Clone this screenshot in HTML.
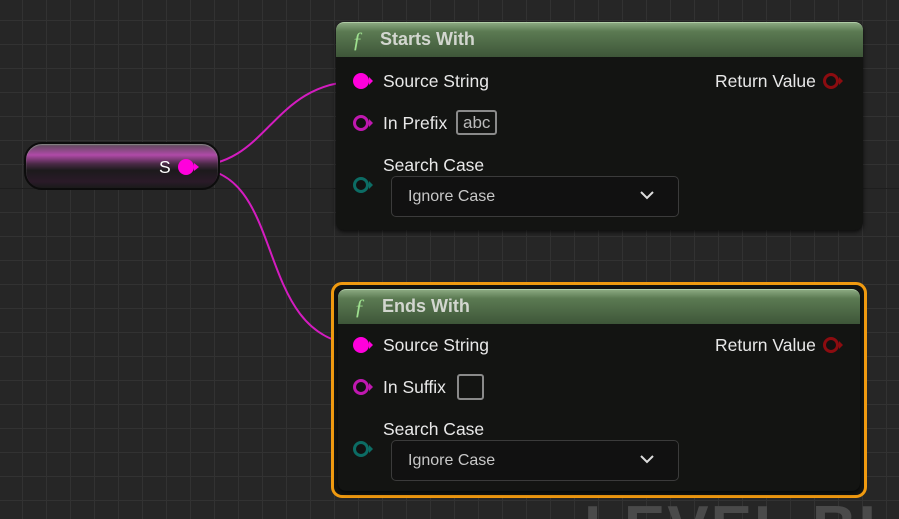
<!DOCTYPE html>
<html style="overflow:hidden;width:899px;height:519px"><head><meta charset="utf-8"><style>
*{margin:0;padding:0;box-sizing:border-box}
body{width:899px;height:519px;overflow:hidden;position:relative;font-family:"Liberation Sans",sans-serif;
background-color:#262626;
background-image:linear-gradient(#323232 1px,transparent 1px),linear-gradient(90deg,#323232 1px,transparent 1px);
background-size:24px 24px;background-position:0 20px,22px 0;}
.major{position:absolute;left:0;width:899px;height:1px;background:#1e1e1e;top:188px}
.node{position:absolute;background:#131412;border-radius:8px;box-shadow:0 2px 4px rgba(0,0,0,.7)}
.hdr{position:absolute;left:0;top:0;right:0;height:35px;border-radius:8px 8px 0 0;
background:linear-gradient(180deg,#8aa880 0%,#5b7a52 25%,#3e5639 100%);border-top:1px solid #b0cca6}
.hdr .f{position:absolute;left:16px;top:4px;color:#9ee08f;font-family:"Liberation Serif",serif;font-style:italic;font-size:22px}
.hdr .t{position:absolute;left:44px;top:6px;color:#d2d6cf;font-weight:bold;font-size:18px}
.lbl{position:absolute;color:#e8e8e8;font-size:17.5px}
.pin{position:absolute;width:16px;height:16px;border-radius:50%}
.arr{position:absolute;width:0;height:0;border-top:4px solid transparent;border-bottom:4px solid transparent}
.box{position:absolute;border:2px solid #8a8a8a;border-radius:3px;color:#bbb;font-size:17px;padding:0 5px;height:25px;line-height:21px}
.dd{position:absolute;width:288px;height:41px;border:1px solid #3b3b3b;border-radius:5px;background:#111;color:#c8c8c8;font-size:16px;padding:11px 0 0 16px}
.dd svg{position:absolute;right:24px;top:14px}
</style></head><body>
<div class="major"></div>
<div style="position:absolute;left:584px;top:498px;width:315px;height:21px;overflow:hidden">
<div style="position:absolute;left:0;top:0;color:#4a4a4a;font-weight:bold;font-size:62px;white-space:nowrap;letter-spacing:2px;line-height:62px">LEVEL BLUEPRINT</div></div>
<svg width="899" height="519" style="position:absolute;left:0;top:0">
<path d="M192 166 C 270 166, 270 82, 360 81" stroke="#d41cc0" stroke-width="2" fill="none"/>
<path d="M192 168 C 290 168, 250 340, 360 345" stroke="#d41cc0" stroke-width="2" fill="none"/>
</svg>
<div style="position:absolute;left:24px;top:142px;width:196px;height:48px;border-radius:18px;background:linear-gradient(180deg,#5a4a58 0%,#b04aa8 25%,#4a2a46 45%,#1c1a1c 60%,#2a1a28 85%,#1a1a1a 100%);border:2px solid #0c0c0c;box-shadow:inset 0 1px 1px #888"></div>
<div class="lbl" style="left:159px;top:157px;color:#fff">S</div>
<div class="pin" style="left:178px;top:159px;background:#ff00dc"></div>
<div class="arr" style="left:194px;top:163px;border-left:5px solid #ff00dc"></div>

<div class="node" style="left:336px;top:22px;width:527px;height:208px">
<div class="hdr"><span class="f">ƒ</span><span class="t">Starts With</span></div>
</div>
<div style="position:absolute;left:331px;top:282px;width:536px;height:216px;border:3px solid #f09a10;border-radius:11px;background:#131412"></div>
<div class="node" style="left:338px;top:289px;width:522px;height:202px">
<div class="hdr"><span class="f">ƒ</span><span class="t">Ends With</span></div>
</div>

<div class="pin" style="left:353px;top:73px;background:#ff00dc"></div><div class="arr" style="left:369px;top:77px;border-left:4px solid #ff00dc"></div>
<div class="lbl" style="left:383px;top:71px">Source String</div>
<div class="lbl" style="left:715px;top:71px">Return Value</div>
<div class="pin" style="left:823px;top:73px;border:3px solid #8c0c10;background:#111"></div><div class="arr" style="left:839px;top:77px;border-left:4px solid #8c0c10"></div>
<div class="pin" style="left:353px;top:115px;border:3px solid #c018b0;background:#111"></div><div class="arr" style="left:369px;top:119px;border-left:4px solid #c018b0"></div>
<div class="lbl" style="left:383px;top:113px">In Prefix</div>
<div class="box" style="left:456px;top:110px">abc</div>
<div class="lbl" style="left:383px;top:155px">Search Case</div>
<div class="pin" style="left:353px;top:177px;border:3px solid #0c6c64;background:#111"></div><div class="arr" style="left:369px;top:181px;border-left:4px solid #0c6c64"></div>
<div class="dd" style="left:391px;top:176px">Ignore Case<svg width="14" height="9"><path d="M1 1 L7 7 L13 1" stroke="#ddd" stroke-width="2" fill="none"/></svg></div>

<div class="pin" style="left:353px;top:337px;background:#ff00dc"></div><div class="arr" style="left:369px;top:341px;border-left:4px solid #ff00dc"></div>
<div class="lbl" style="left:383px;top:335px">Source String</div>
<div class="lbl" style="left:715px;top:335px">Return Value</div>
<div class="pin" style="left:823px;top:337px;border:3px solid #8c0c10;background:#111"></div><div class="arr" style="left:839px;top:341px;border-left:4px solid #8c0c10"></div>
<div class="pin" style="left:353px;top:379px;border:3px solid #c018b0;background:#111"></div><div class="arr" style="left:369px;top:383px;border-left:4px solid #c018b0"></div>
<div class="lbl" style="left:383px;top:377px">In Suffix</div>
<div class="box" style="left:457px;top:374px;width:27px;height:26px"></div>
<div class="lbl" style="left:383px;top:419px">Search Case</div>
<div class="pin" style="left:353px;top:441px;border:3px solid #0c6c64;background:#111"></div><div class="arr" style="left:369px;top:445px;border-left:4px solid #0c6c64"></div>
<div class="dd" style="left:391px;top:440px">Ignore Case<svg width="14" height="9"><path d="M1 1 L7 7 L13 1" stroke="#ddd" stroke-width="2" fill="none"/></svg></div>
</body></html>
